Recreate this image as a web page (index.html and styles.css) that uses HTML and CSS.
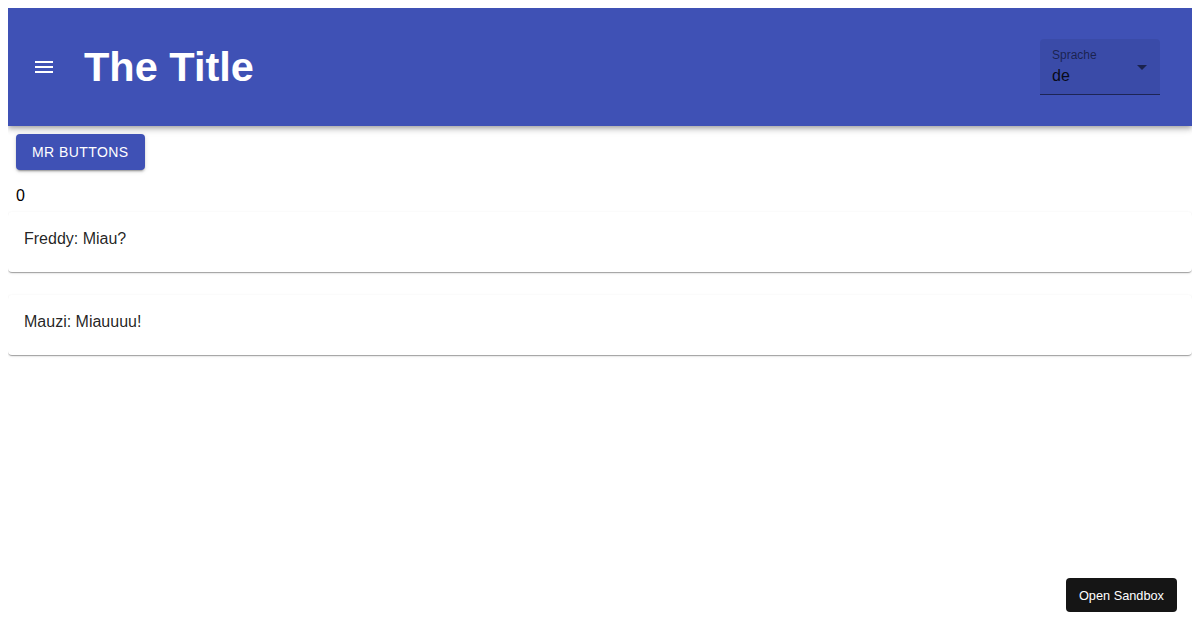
FILE: index.html
```html
<!DOCTYPE html>
<html lang="de">
<head>
<meta charset="utf-8">
<title>The Title</title>
<link rel="stylesheet" href="styles.css">
</head>
<body>
<header class="appbar">
  <button class="icon-btn" aria-label="menu">
    <svg width="24" height="24" viewBox="0 0 24 24"><path fill="#fff" d="M3 18h18v-2H3v2zm0-5h18v-2H3v2zm0-7v2h18V6H3z"/></svg>
  </button>
  <h1 class="title">The Title</h1>
  <div class="spacer"></div>
  <div class="select">
    <span class="select-label">Sprache</span>
    <span class="select-value">de</span>
    <svg class="select-arrow" width="24" height="24" viewBox="0 0 24 24"><path fill="rgba(0,0,0,0.54)" d="M7 10l5 5 5-5z"/></svg>
  </div>
</header>
<main class="content">
  <div class="actions"><button class="btn">MR BUTTONS</button></div>
  <div class="counter">0</div>
  <div class="card"><p class="card-text">Freddy: Miau?</p></div>
  <div class="card"><p class="card-text">Mauzi: Miauuuu!</p></div>
</main>
<button class="sandbox">Open Sandbox</button>
</body>
</html>
```
FILE: styles.css
```css
html, body { background: #fff; }
body {
  margin: 8px;
  font-family: "Liberation Sans", Arial, sans-serif;
  color: rgba(0,0,0,0.87);
}
.appbar {
  display: flex;
  align-items: center;
  height: 118px;
  padding: 0 32px 0 12px;
  box-sizing: border-box;
  background: #3f51b5;
  color: #fff;
  box-shadow: 0 2px 4px -1px rgba(0,0,0,0.2), 0 4px 5px 0 rgba(0,0,0,0.14), 0 1px 10px 0 rgba(0,0,0,0.12);
}
.icon-btn {
  display: flex;
  padding: 12px;
  border: 0;
  background: transparent;
  margin-right: 16px;
  cursor: pointer;
}
.title {
  margin: 0;
  font-family: "Liberation Sans", Arial, sans-serif;
  font-weight: 700;
  font-size: 41.5px;
  line-height: 48px;
}
.spacer { flex: 1; }
.select {
  position: relative;
  width: 120px;
  height: 56px;
  box-sizing: border-box;
  padding: 9px 12px 0;
  background: rgba(0,0,0,0.07);
  border-radius: 4px 4px 0 0;
  border-bottom: 1px solid rgba(0,0,0,0.5);
  display: flex;
  flex-direction: column;
}
.select-label {
  font-size: 12px;
  line-height: 14px;
  color: rgba(0,0,0,0.55);
}
.select-value {
  margin-top: 2px;
  font-size: 16px;
  line-height: 24px;
  color: rgba(0,0,0,0.87);
}
.select-arrow {
  position: absolute;
  right: 6px;
  top: 16px;
}
.actions { padding: 8px 8px 0; }
.btn {
  font-family: "Liberation Sans", Arial, sans-serif;
  font-weight: 400;
  font-size: 14px;
  letter-spacing: 0.03em;
  line-height: 24px;
  padding: 6px 16px;
  border: 0;
  border-radius: 4px;
  background: #3f51b5;
  color: #fff;
  box-shadow: 0 3px 1px -2px rgba(0,0,0,0.2), 0 2px 2px 0 rgba(0,0,0,0.14), 0 1px 5px 0 rgba(0,0,0,0.12);
}
.counter {
  padding: 14px 8px 4px;
  font-size: 16px;
  line-height: 24px;
  color: #000;
}
.card {
  background: #fff;
  border-radius: 4px;
  box-shadow: 0 2px 1px -1px rgba(0,0,0,0.2), 0 1px 1px 0 rgba(0,0,0,0.14), 0 1px 3px 0 rgba(0,0,0,0.12);
  padding: 17px 16px 23px;
  margin-bottom: 23px;
}
.card-text {
  margin: 0;
  font-size: 16px;
  line-height: 20px;
}
.sandbox {
  position: fixed;
  right: 23px;
  bottom: 18px;
  height: 34px;
  padding: 0 13px;
  border: 0;
  border-radius: 4px;
  background: #151515;
  color: #fff;
  font-family: "Liberation Sans", Arial, sans-serif;
  font-size: 12.75px;
}
```
